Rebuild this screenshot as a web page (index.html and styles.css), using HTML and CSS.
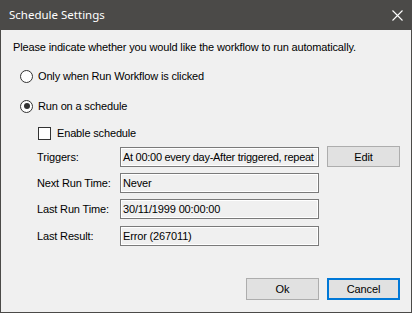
FILE: index.html
```html
<!DOCTYPE html>
<html>
<head>
<meta charset="utf-8">
<link rel="stylesheet" href="styles.css">
</head>
<body>
<div class="window">
  <div class="titlebar">
    <span class="title">Schedule Settings</span>
    <svg class="close" width="11" height="11" viewBox="0 0 11 11"><path d="M0.5 0.5 L10.5 10.5 M10.5 0.5 L0.5 10.5" stroke="#ffffff" stroke-width="1.1" fill="none"/></svg>
  </div>
  <div class="content">
    <div class="intro">Please indicate whether you would like the workflow to run automatically.</div>
    <div class="radio-row first">
      <span class="radio"></span>
      <span class="radio-label">Only when Run Workflow is clicked</span>
    </div>
    <div class="radio-row second">
      <span class="radio checked"><span class="dot"></span></span>
      <span class="radio-label">Run on a schedule</span>
    </div>
    <div class="check-row">
      <span class="checkbox"></span>
      <span class="check-label">Enable schedule</span>
    </div>
    <div class="field-row trig">
      <span class="flabel">Triggers:</span>
      <span class="fbox tight">At 00:00 every day-After triggered, repeat</span>
      <span class="btn edit">Edit</span>
    </div>
    <div class="field-row r2">
      <span class="flabel">Next Run Time:</span>
      <span class="fbox">Never</span>
    </div>
    <div class="field-row r3">
      <span class="flabel">Last Run Time:</span>
      <span class="fbox">30/11/1999 00:00:00</span>
    </div>
    <div class="field-row r4">
      <span class="flabel">Last Result:</span>
      <span class="fbox">Error (267011)</span>
    </div>
    <div class="buttons">
      <span class="btn ok">Ok</span>
      <span class="btn cancel">Cancel</span>
    </div>
  </div>
</div>
</body>
</html>
```

FILE: styles.css
```css
html, body {
  margin: 0;
  padding: 0;
  background: #f0f0f0;
}
.window {
  width: 412px;
  height: 313px;
  box-sizing: border-box;
  display: flex;
  flex-direction: column;
  background: #f0f0f0;
  border: 1px solid #4b4a48;
  border-top: none;
  font-family: "Liberation Sans", Arial, sans-serif;
  font-size: 11px;
  letter-spacing: -0.15px;
  color: #000;
}
.titlebar {
  height: 30px;
  flex: none;
  background: #4b4a48;
  display: flex;
  align-items: center;
  justify-content: space-between;
  padding: 0 9px 0 9px;
  margin: 0 -1px;
}
.title {
  font-family: "Noto Sans", "Open Sans", sans-serif;
  font-size: 11.5px;
  letter-spacing: 0;
  color: #ffffff;
  line-height: 16px;
}
.close {
  display: block;
  margin-top: 1px;
}
.content {
  flex: 1;
  display: flex;
  flex-direction: column;
  padding: 10px 0 0 12px;
}
.intro {
  line-height: 14px;
  height: 14px;
}
.radio-row, .check-row {
  display: flex;
  align-items: center;
  height: 16px;
}
.radio-row.first { margin-top: 14px; margin-left: 7px; }
.radio-row.second { margin-top: 14px; margin-left: 7px; }
.radio {
  width: 11px;
  height: 11px;
  border: 1px solid #333333;
  border-radius: 50%;
  background: #ffffff;
  display: flex;
  align-items: center;
  justify-content: center;
  flex: none;
}
.dot {
  width: 6px;
  height: 6px;
  border-radius: 50%;
  background: #333333;
}
.radio-label {
  margin-left: 5px;
}
.check-row {
  margin-top: 11px;
  margin-left: 25px;
}
.checkbox {
  width: 11px;
  height: 11px;
  border: 1px solid #333333;
  background: #ffffff;
  flex: none;
}
.check-label {
  margin-left: 6px;
}
.field-row {
  display: flex;
  align-items: center;
  margin-left: 24px;
  height: 20px;
}
.field-row.trig { margin-top: 6px; }
.field-row.r2 { margin-top: 6px; }
.field-row.r3 { margin-top: 6px; }
.field-row.r4 { margin-top: 7px; }
.flabel {
  width: 83px;
  flex: none;
}
.fbox {
  width: 199px;
  height: 20px;
  box-sizing: border-box;
  border: 1px solid #7a7a7a;
  box-shadow: inset 0 0 0 1px #ffffff;
  background: #f0f0f0;
  padding: 0 0 0 2px;
  line-height: 18px;
  white-space: nowrap;
  overflow: hidden;
  flex: none;
}
.fbox.tight {
  letter-spacing: -0.28px;
}
.btn {
  display: flex;
  align-items: center;
  justify-content: center;
  width: 73px;
  height: 22px;
  box-sizing: border-box;
  background: #e1e1e1;
  border: 1px solid #adadad;
  flex: none;
}
.edit {
  margin-left: 8px;
  height: 21px;
  margin-top: -1px;
}
.buttons {
  display: flex;
  justify-content: flex-end;
  gap: 8px;
  margin-top: 32px;
  padding-right: 11px;
}
.cancel {
  border: 2px solid #0078d7;
}
```
